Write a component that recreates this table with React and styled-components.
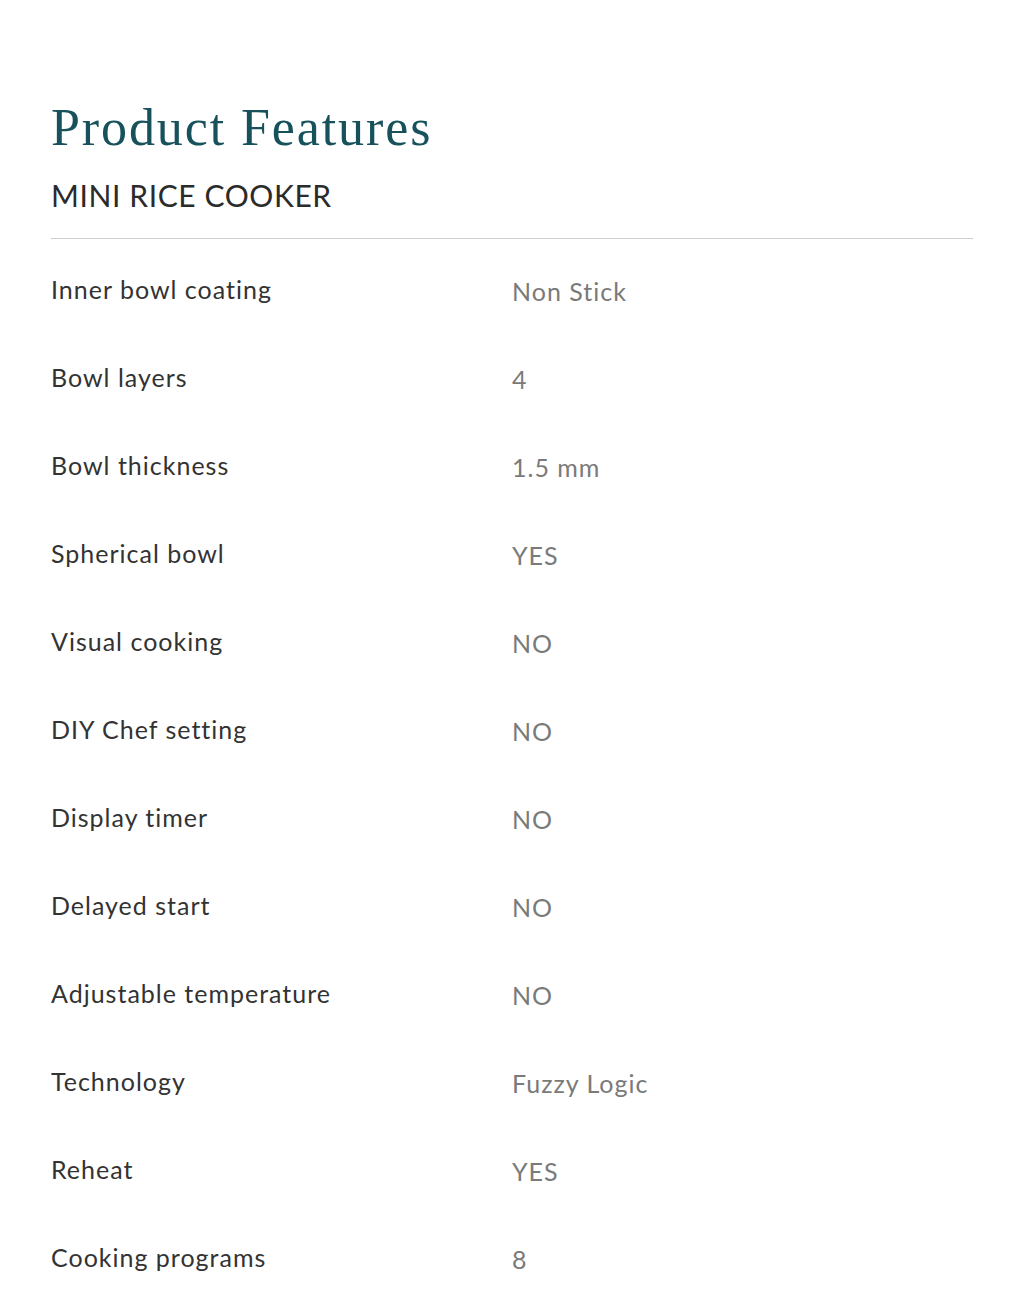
import { Fragment } from "react";
import styled, { createGlobalStyle } from "styled-components";

const GlobalStyle = createGlobalStyle`
  body {
    margin: 0;
    background: #ffffff;
    font-family: Lato, "Noto Sans", sans-serif;
  }
`;

const features = [
  ["Inner bowl coating", "Non Stick"],
  ["Bowl layers", "4"],
  ["Bowl thickness", "1.5 mm"],
  ["Spherical bowl", "YES"],
  ["Visual cooking", "NO"],
  ["DIY Chef setting", "NO"],
  ["Display timer", "NO"],
  ["Delayed start", "NO"],
  ["Adjustable temperature", "NO"],
  ["Technology", "Fuzzy Logic"],
  ["Reheat", "YES"],
  ["Cooking programs", "8"],
];

const Section = styled.section`
  padding: 96px 51px 0;
`;

const Title = styled.h1`
  margin: 0;
  font-family: "Liberation Serif", "DejaVu Serif", serif;
  font-weight: 400;
  font-size: 52px;
  line-height: 64px;
  letter-spacing: 1.9px;
  color: #17525c;
`;

const Subtitle = styled.h2`
  margin: 17px 0 0;
  font-family: Lato, "Noto Sans", sans-serif;
  font-weight: 400;
  font-size: 30px;
  line-height: 36px;
  letter-spacing: 0.6px;
  color: #2b2b2b;
`;

const Divider = styled.hr`
  margin: 25px 0 0;
  border: none;
  border-top: 1px solid #cfcfcf;
`;

const List = styled.dl`
  margin: 0;
  padding-top: 32px;
  display: grid;
  grid-template-columns: 1fr 1fr;
  grid-auto-rows: 88px;
`;

const Label = styled.dt`
  margin: 0;
  font-size: 25px;
  line-height: 36px;
  letter-spacing: 1px;
  color: #333333;
`;

const Value = styled.dd`
  margin: 0;
  padding-top: 2px;
  font-size: 25px;
  line-height: 36px;
  letter-spacing: 1px;
  color: #7a7a7a;
`;

export default function App() {
  return (
    <>
      <GlobalStyle />
      <Section>
        <Title>Product Features</Title>
        <Subtitle>MINI RICE COOKER</Subtitle>
        <Divider />
        <List>
          {features.map(([label, value]) => (
            <Fragment key={label}>
              <Label>{label}</Label>
              <Value>{value}</Value>
            </Fragment>
          ))}
        </List>
      </Section>
    </>
  );
}
